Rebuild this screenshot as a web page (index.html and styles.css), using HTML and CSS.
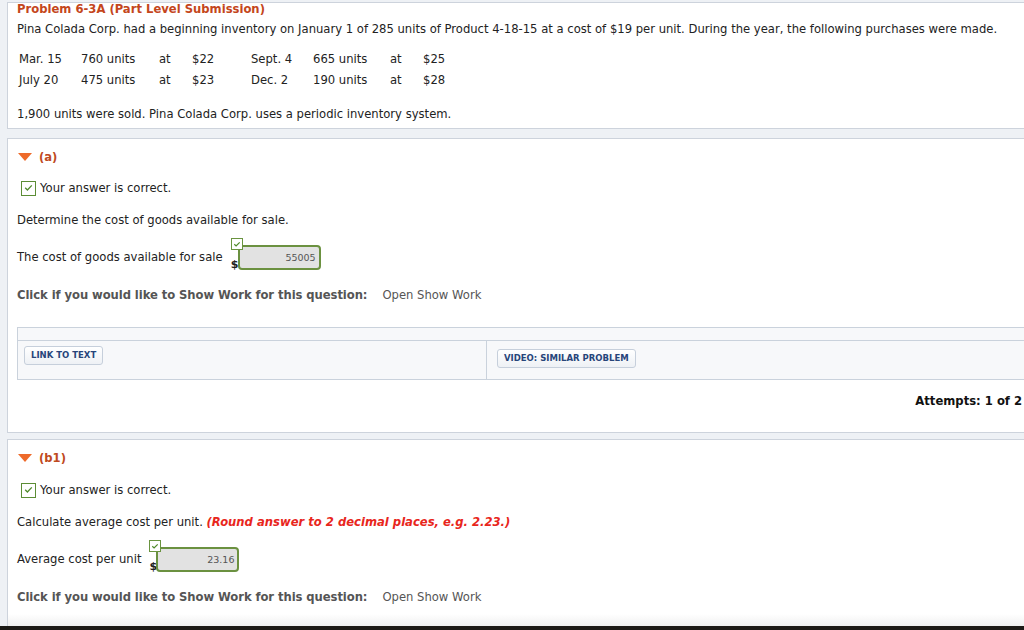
FILE: index.html
```html
<!DOCTYPE html>
<html>
<head>
<meta charset="utf-8">
<link rel="stylesheet" href="styles.css">
</head>
<body>
<div class="page">
  <section class="card card-intro">
    <h1 class="title">Problem 6-3A (Part Level Submission)</h1>
    <p class="line intro">Pina Colada Corp. had a beginning inventory on January 1 of 285 units of Product 4-18-15 at a cost of $19 per unit. During the year, the following purchases were made.</p>
    <div class="purchases">
      <span>Mar. 15</span><span>760 units</span><span>at</span><span>$22</span><span>Sept. 4</span><span>665 units</span><span>at</span><span>$25</span>
      <span>July 20</span><span>475 units</span><span>at</span><span>$23</span><span>Dec. 2</span><span>190 units</span><span>at</span><span>$28</span>
    </div>
    <p class="line sold">1,900 units were sold. Pina Colada Corp. uses a periodic inventory system.</p>
  </section>

  <section class="card card-a">
    <div class="part-head"><span class="tri"></span><span class="part-label">(a)</span></div>
    <div class="correct"><span class="chk"><svg viewBox="0 0 15 15" width="15" height="15"><path d="M4.2 7.8 L6.4 10 L10.8 5.4" fill="none" stroke="#4f8a2a" stroke-width="1.3"/></svg></span><span>Your answer is correct.</span></div>
    <p class="line q">Determine the cost of goods available for sale.</p>
    <div class="answer-row">
      <span class="ans-label">The cost of goods available for sale</span>
      <div class="ans-group">
        <span class="chk-sm"><svg viewBox="0 0 12 12" width="12" height="12"><path d="M3.3 6.2 L5.1 7.9 L8.7 4.3" fill="none" stroke="#4f8a2a" stroke-width="1.2"/></svg></span>
        <span class="dollar">$</span>
        <span class="ans-box">55005</span>
      </div>
    </div>
    <p class="line showwork"><b>Click if you would like to Show Work for this question:</b><span class="open">Open Show Work</span></p>
    <div class="resources">
      <div class="res-head"></div>
      <div class="res-row">
        <div class="res-cell res-left"><span class="btn">LINK TO TEXT</span></div>
        <div class="res-cell res-right"><span class="btn">VIDEO: SIMILAR PROBLEM</span></div>
      </div>
    </div>
    <p class="attempts">Attempts: 1 of 2</p>
  </section>

  <section class="card card-b">
    <div class="part-head"><span class="tri"></span><span class="part-label">(b1)</span></div>
    <div class="correct"><span class="chk"><svg viewBox="0 0 15 15" width="15" height="15"><path d="M4.2 7.8 L6.4 10 L10.8 5.4" fill="none" stroke="#4f8a2a" stroke-width="1.3"/></svg></span><span>Your answer is correct.</span></div>
    <p class="line q">Calculate average cost per unit. <em class="hint">(Round answer to 2 decimal places, e.g. 2.23.)</em></p>
    <div class="answer-row">
      <span class="ans-label">Average cost per unit</span>
      <div class="ans-group">
        <span class="chk-sm"><svg viewBox="0 0 12 12" width="12" height="12"><path d="M3.3 6.2 L5.1 7.9 L8.7 4.3" fill="none" stroke="#4f8a2a" stroke-width="1.2"/></svg></span>
        <span class="dollar">$</span>
        <span class="ans-box">23.16</span>
      </div>
    </div>
    <p class="line showwork"><b>Click if you would like to Show Work for this question:</b><span class="open">Open Show Work</span></p>
    <div class="fade"></div>
  </section>
  <div class="desk"></div>
</div>
</body>
</html>
```

FILE: styles.css
```css
html, body {
  margin: 0;
  padding: 0;
  height: 630px;
  overflow: hidden;
  background: #eef1f5;
}
body {
  font-family: "DejaVu Sans", Verdana, sans-serif;
  font-size: 11.6px;
  color: #222;
}
p, h1 { margin: 0; }

.page {
  width: 1024px;
  height: 630px;
  overflow: hidden;
  padding: 2px 0 0 7px;
  box-sizing: border-box;
  display: flex;
  flex-direction: column;
  position: relative;
}

.card {
  background: #fff;
  border: 1px solid #cdd3dc;
  margin-right: -40px;
  padding: 0 10px 0 9px;
  display: flex;
  flex-direction: column;
}

.line { line-height: 14px; }

/* intro card */
.card-intro { padding-bottom: 7px; }
.title {
  font-size: 11.6px;
  font-weight: bold;
  color: #c4461c;
  line-height: 12px;
}
.intro { margin-top: 7px; }
.purchases {
  margin-top: 12px;
  padding-left: 2px;
  display: grid;
  grid-template-columns: 62px 78px 33px 59px 62px 77px 33px auto;
  grid-auto-rows: 21px;
  align-items: center;
}
.sold { margin-top: 17px; }

/* part cards */
.card-a { margin-top: 9px; padding-top: 11px; padding-bottom: 24px; }
.card-b { margin-top: 6px; padding-top: 11px; flex: 1; position: relative; }

.part-head {
  display: flex;
  align-items: center;
  height: 14px;
  gap: 7px;
  padding-left: 1px;
}
.tri {
  width: 0;
  height: 0;
  border-left: 7px solid transparent;
  border-right: 7px solid transparent;
  border-top: 8px solid #ee6a2a;
}
.part-label {
  font-weight: bold;
  font-size: 11.6px;
  color: #bf4a1e;
}

.correct {
  margin-top: 16px;
  display: flex;
  align-items: center;
  height: 16px;
  gap: 4px;
  padding-left: 4px;
}
.card-b .correct { margin-top: 17px; }
.chk {
  width: 15px;
  height: 15px;
  box-sizing: border-box;
  border: 1.5px solid #5c8d35;
  background: #fff;
  display: flex;
}
.chk svg { margin: -1.5px; }

.q { margin-top: 17px; }
.hint {
  color: #e8261c;
  font-weight: bold;
  font-style: italic;
}

.answer-row {
  margin-top: 11px;
  display: flex;
  align-items: flex-start;
  height: 32px;
}
.ans-label {
  margin-top: 12px;
  line-height: 14px;
}
.ans-group {
  position: relative;
  display: flex;
  align-items: flex-end;
  padding-top: 7px;
  margin-left: 8px;
}
.chk-sm {
  position: absolute;
  top: 0;
  left: 0;
  width: 12px;
  height: 12px;
  box-sizing: border-box;
  border: 1px solid #6a9440;
  background: #fff;
  display: flex;
  z-index: 2;
}
.chk-sm svg { margin: -1px; }
.dollar {
  font-weight: bold;
  font-size: 11px;
  line-height: 11px;
  width: 7px;
}
.ans-box {
  width: 83px;
  height: 25px;
  box-sizing: border-box;
  border: 2px solid #6b9140;
  border-radius: 4px;
  background: #e2e2e2;
  color: #555;
  font-size: 9.5px;
  text-align: right;
  padding-right: 3px;
  line-height: 21px;
}

.showwork {
  margin-top: 18px;
  color: #555;
}
.showwork b {
  color: #555;
  letter-spacing: -0.07px;
}
.open {
  margin-left: 15px;
  color: #555;
}

/* resources panel */
.resources {
  margin-top: 25px;
  border: 1px solid #cad2dc;
  background: #f7f8fa;
  margin-right: -20px;
}
.res-head {
  height: 12px;
  border-bottom: 1px solid #cad2dc;
}
.res-row {
  display: flex;
  height: 38px;
}
.res-cell { box-sizing: border-box; }
.res-left {
  width: 469px;
  border-right: 1px solid #cad2dc;
  padding: 5px 0 0 6px;
}
.res-right {
  flex: 1;
  padding: 8px 0 0 10px;
}
.btn {
  display: inline-block;
  font-size: 8.5px;
  font-weight: bold;
  color: #27457a;
  background: linear-gradient(#ffffff, #eef1f5);
  border: 1px solid #c6cfdb;
  border-radius: 3px;
  padding: 0 6px;
  line-height: 17px;
}

.attempts {
  margin-top: 14px;
  text-align: right;
  font-weight: bold;
  line-height: 14px;
  color: #111;
  padding-right: 31px;
}

.fade {
  flex: 1;
  margin: 10px -10px 0 -9px;
  background: linear-gradient(#ffffff, #ececec);
}

.desk {
  position: absolute;
  left: 0;
  right: 0;
  bottom: 0;
  height: 4px;
  background: #1c1a16;
}
```
